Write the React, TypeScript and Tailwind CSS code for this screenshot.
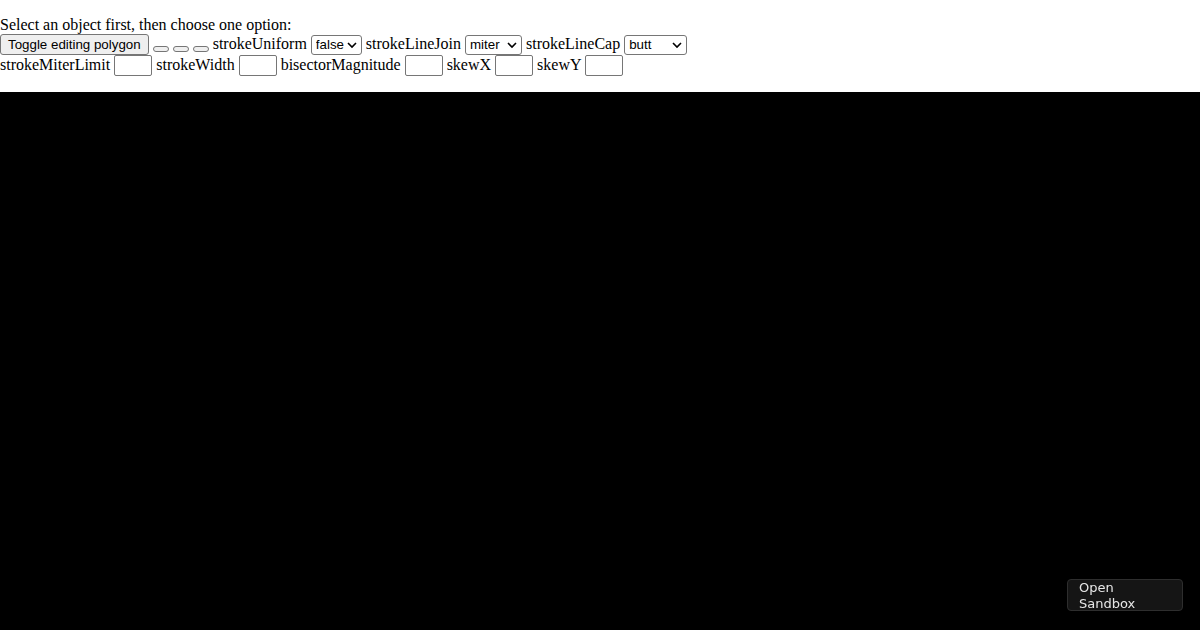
import { useState } from "react";

function Chevron() {
  return (
    <svg className="pointer-events-none absolute right-[5px] top-1/2 -translate-y-1/2" width="10" height="7" viewBox="0 0 10 7" fill="none">
      <path d="M1 1.5l4 4 4-4" stroke="#000" strokeWidth="1.6" />
    </svg>
  );
}

function Pick({ value, options, width, onChange }: { value: string; options: string[]; width: string; onChange: (v: string) => void }) {
  return (
    <span className="relative inline-block align-baseline">
      <select
        value={value}
        onChange={(e) => onChange(e.target.value)}
        className={`appearance-none bg-white border border-[#767676] rounded-[3px] pl-[4px] pr-[14px] py-px h-[20px] font-['Liberation_Sans',Arial,sans-serif] text-[13.333px] leading-[16px] text-black ${width}`}
      >
        {options.map((o) => <option key={o} value={o}>{o}</option>)}
      </select>
      <Chevron />
    </span>
  );
}

function Num({ value, onChange }: { value: string; onChange: (v: string) => void }) {
  return (
    <input
      value={value}
      onChange={(e) => onChange(e.target.value)}
      className="inline-block w-[38px] h-[21px] bg-white border border-[#767676] rounded-[2px] px-[3px] py-[2px] font-['Liberation_Sans',Arial,sans-serif] text-[13.333px] leading-[normal] align-baseline"
    />
  );
}

const btn = "inline-block bg-[#efefef] border border-[#767676] rounded-[3px] px-[7px] py-[2px] font-['Liberation_Sans',Arial,sans-serif] text-[13.333px] leading-[15px] text-black align-baseline hover:bg-[#e5e5e5]";

export default function App() {
  const [uniform, setUniform] = useState("false");
  const [lineJoin, setLineJoin] = useState("miter");
  const [lineCap, setLineCap] = useState("butt");
  const [vals, setVals] = useState<Record<string, string>>({});
  const set = (k: string) => (v: string) => setVals((s) => ({ ...s, [k]: v }));

  return (
    <div className="h-[630px] overflow-hidden bg-white text-black font-['Liberation_Serif','Times_New_Roman',serif] text-base leading-[normal]">
      <div className="py-4">
        <div>Select an object first, then choose one option:</div>
        <div>
          <button className={btn}>Toggle editing polygon</button>{" "}
          <button className={`${btn} h-[6px] w-4 p-0`}></button>{" "}
          <button className={`${btn} h-[6px] w-4 p-0`}></button>{" "}
          <button className={`${btn} h-[6px] w-4 p-0`}></button>{" "}
          strokeUniform <Pick value={uniform} options={["false", "true"]} width="w-[51px]" onChange={setUniform} />{" "}
          strokeLineJoin <Pick value={lineJoin} options={["miter", "round", "bevel"]} width="w-[57px]" onChange={setLineJoin} />{" "}
          strokeLineCap <Pick value={lineCap} options={["butt", "round", "square"]} width="w-[63px]" onChange={setLineCap} />
        </div>
        <div>
          strokeMiterLimit <Num value={vals.miter ?? ""} onChange={set("miter")} />{" "}
          strokeWidth <Num value={vals.width ?? ""} onChange={set("width")} />{" "}
          bisectorMagnitude <Num value={vals.bisector ?? ""} onChange={set("bisector")} />{" "}
          skewX <Num value={vals.skewX ?? ""} onChange={set("skewX")} />{" "}
          skewY <Num value={vals.skewY ?? ""} onChange={set("skewY")} />
        </div>
      </div>
      <div className="h-[600px] w-full bg-black" />
      <button className="fixed right-[17px] bottom-[19px] w-[116px] h-[32px] rounded-[4px] border border-[#2e2e2e] bg-[#151515] pl-[11px] text-left font-['DejaVu_Sans',sans-serif] text-[13px] leading-[16px] text-[#e6e6e6]">
        <span className="block">Open</span>
        <span className="block">Sandbox</span>
      </button>
    </div>
  );
}
